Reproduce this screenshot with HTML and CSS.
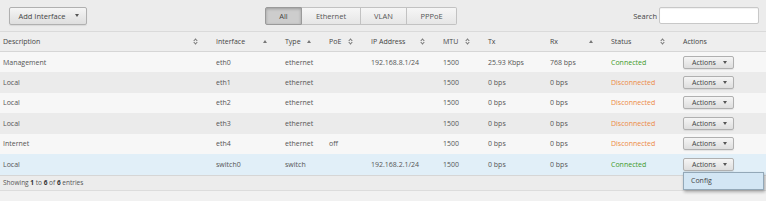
FILE: index.html
```html
<!DOCTYPE html>
<html>
<head>
<meta charset="utf-8">
<link rel="stylesheet" href="styles.css">
</head>
<body>
<div class="toolbar">
  <button class="btn add-btn">Add Interface <span class="caret"></span></button>
  <div class="tabs">
    <button class="tab tab-all active">All</button>
    <button class="tab tab-eth">Ethernet</button>
    <button class="tab tab-vlan">VLAN</button>
    <button class="tab tab-pppoe">PPPoE</button>
  </div>
  <label class="search">Search <input type="text"></label>
</div>
<table class="grid">
  <colgroup>
    <col class="c-desc"><col class="c-if"><col class="c-type"><col class="c-poe"><col class="c-ip"><col class="c-mtu"><col class="c-tx"><col class="c-rx"><col class="c-status"><col class="c-act">
  </colgroup>
  <thead>
    <tr>
      <th class="first"><div class="th"><span>Description</span><span class="both"></span></div></th>
      <th><div class="th"><span>Interface</span><span class="up"></span></div></th>
      <th><div class="th"><span>Type</span><span class="up"></span></div></th>
      <th><div class="th"><span>PoE</span><span class="both"></span></div></th>
      <th><div class="th"><span>IP Address</span><span class="both"></span></div></th>
      <th><div class="th"><span>MTU</span><span class="both"></span></div></th>
      <th><div class="th"><span>Tx</span></div></th>
      <th><div class="th"><span>Rx</span><span class="up"></span></div></th>
      <th><div class="th"><span>Status</span><span class="both"></span></div></th>
      <th><div class="th"><span>Actions</span></div></th>
    </tr>
  </thead>
  <tbody>
    <tr class="odd">
      <td class="first">Management</td><td>eth0</td><td>ethernet</td><td></td><td>192.168.8.1/24</td><td>1500</td><td>25.93 Kbps</td><td>768 bps</td><td class="ok">Connected</td>
      <td class="act"><button class="btn act-btn">Actions <span class="caret"></span></button></td>
    </tr>
    <tr class="even">
      <td class="first">Local</td><td>eth1</td><td>ethernet</td><td></td><td></td><td>1500</td><td>0 bps</td><td>0 bps</td><td class="bad">Disconnected</td>
      <td class="act"><button class="btn act-btn">Actions <span class="caret"></span></button></td>
    </tr>
    <tr class="odd">
      <td class="first">Local</td><td>eth2</td><td>ethernet</td><td></td><td></td><td>1500</td><td>0 bps</td><td>0 bps</td><td class="bad">Disconnected</td>
      <td class="act"><button class="btn act-btn">Actions <span class="caret"></span></button></td>
    </tr>
    <tr class="even">
      <td class="first">Local</td><td>eth3</td><td>ethernet</td><td></td><td></td><td>1500</td><td>0 bps</td><td>0 bps</td><td class="bad">Disconnected</td>
      <td class="act"><button class="btn act-btn">Actions <span class="caret"></span></button></td>
    </tr>
    <tr class="odd">
      <td class="first">Internet</td><td>eth4</td><td>ethernet</td><td>off</td><td></td><td>1500</td><td>0 bps</td><td>0 bps</td><td class="bad">Disconnected</td>
      <td class="act"><button class="btn act-btn">Actions <span class="caret"></span></button></td>
    </tr>
    <tr class="selected">
      <td class="first">Local</td><td>switch0</td><td>switch</td><td></td><td>192.168.2.1/24</td><td>1500</td><td>0 bps</td><td>0 bps</td><td class="ok">Connected</td>
      <td class="act"><div class="act-wrap"><button class="btn act-btn">Actions <span class="caret"></span></button>
        <div class="menu"><div class="menu-item">Config</div></div></div></td>
    </tr>
  </tbody>
</table>
<div class="footer">Showing <b>1</b> to <b>6</b> of <b>6</b> entries</div>
<div class="bottom"></div>
</body>
</html>
```
FILE: styles.css
```css
html, body {
  margin: 0;
  padding: 0;
}
body {
  background: #ededed;
  font-family: "Open Sans", "DejaVu Sans", sans-serif;
  color: #555;
  font-size: 7px;
  width: 766px;
  height: 201px;
  overflow: hidden;
}
.toolbar {
  display: flex;
  align-items: center;
  height: 31px;
  padding: 0 7px 0 9px;
  box-sizing: border-box;
  background: #ececec;
}
.btn {
  font-family: "Open Sans", "DejaVu Sans", sans-serif;
  color: #444;
  background: linear-gradient(#f5f5f5, #dedede);
  border: 1px solid #b0b0b0;
  border-radius: 2px;
  padding: 0;
  margin: 0;
  box-sizing: border-box;
  display: flex;
  align-items: center;
  justify-content: center;
  box-shadow: 0 1px 1px rgba(0,0,0,0.08);
}
.caret {
  display: inline-block;
  width: 0;
  height: 0;
  border-left: 2.5px solid transparent;
  border-right: 2.5px solid transparent;
  border-top: 3px solid #555;
}
.add-btn {
  width: 78px;
  height: 18px;
  font-size: 7.5px;
  gap: 9px;
  padding-left: 1px;
}
.tabs {
  display: flex;
  margin-left: 178px;
  height: 18px;
}
.tab {
  font-family: "Open Sans", "DejaVu Sans", sans-serif;
  font-size: 7.5px;
  color: #555;
  background: linear-gradient(#f6f6f6, #e6e6e6);
  border: 1px solid #c2c2c2;
  border-left: none;
  margin: 0;
  padding: 0;
  height: 18px;
  box-sizing: border-box;
}
.tab-all {
  width: 37px;
  border-left: 1px solid #999;
  border-color: #9a9a9a;
  border-radius: 2px 0 0 2px;
}
.tab-all.active {
  background: #cdcdcd;
  box-shadow: inset 0 1px 3px rgba(0,0,0,0.25);
  color: #444;
}
.tab-eth { width: 59px; }
.tab-vlan { width: 46px; }
.tab-pppoe { width: 50px; border-radius: 0 2px 2px 0; }
.search {
  margin-left: auto;
  display: flex;
  align-items: center;
  gap: 2px;
  font-size: 7.5px;
  color: #444;
}
.search input {
  width: 100px;
  height: 17px;
  box-sizing: border-box;
  border: 1px solid #c8c8c8;
  border-radius: 2px;
  background: #fff;
  margin: 0;
  padding: 0 3px;
  box-shadow: inset 0 1px 1px rgba(0,0,0,0.06);
}
.grid {
  width: 766px;
  border-collapse: collapse;
  table-layout: fixed;
}
.c-desc { width: 212px; }
.c-if { width: 69px; }
.c-type { width: 44px; }
.c-poe { width: 42px; }
.c-ip { width: 72px; }
.c-mtu { width: 45px; }
.c-tx { width: 62px; }
.c-rx { width: 61px; }
.c-status { width: 72px; }
.c-act { width: 87px; }
thead tr {
  background: #eeeeee;
  border-top: 1px solid #dadada;
  border-bottom: 1px solid #d6d6d6;
}
th {
  height: 19px;
  padding: 0 0 0 4px;
  font-weight: normal;
  text-align: left;
  color: #444;
  font-size: 7px;
}
th.first, td.first { padding-left: 3px; }
.th {
  display: flex;
  align-items: center;
  justify-content: space-between;
  padding-right: 14px;
}
.up {
  width: 0;
  height: 0;
  border-left: 2.5px solid transparent;
  border-right: 2.5px solid transparent;
  border-bottom: 3px solid #777;
}
.both {
  width: 5px;
  height: 7px;
  position: relative;
}
.both::before, .both::after {
  content: "";
  position: absolute;
  left: 1px;
  width: 2px;
  height: 2px;
  border-left: 1px solid #777;
  border-top: 1px solid #777;
}
.both::before { top: 1px; transform: rotate(45deg); }
.both::after { top: 3px; transform: rotate(-135deg); }
td {
  height: 20.5px;
  padding: 0 0 0 4px;
  font-size: 7px;
  color: #555;
  white-space: nowrap;
  box-sizing: border-box;
}
tr.odd { background: #f7f7f7; }
tr.even { background: #ebebeb; }
tr.selected { background: #e1eff8; }
td.ok { color: #3e9a2a; }
td.bad { color: #ec8a45; }
.act-wrap { position: relative; }
.act-btn {
  width: 51px;
  height: 13px;
  font-size: 7px;
  gap: 7px;
  padding-left: 2px;
}
.menu {
  position: absolute;
  left: 0;
  top: 14px;
  width: 81px;
  height: 18px;
  box-sizing: border-box;
  background: #d3e6f4;
  border: 1px solid #93a8b8;
  box-shadow: 1px 2px 3px rgba(0,0,0,0.3);
  z-index: 2;
  display: flex;
  align-items: center;
}
.menu-item {
  padding-left: 7px;
  color: #444;
  font-size: 7px;
}
.footer {
  height: 14px;
  line-height: 14px;
  padding-left: 3px;
  border-top: 1px solid #d6d6d6;
  border-bottom: 1px solid #dcdcdc;
  background: #ececec;
  font-size: 6.5px;
  color: #555;
}
.footer b { color: #333; }
.bottom {
  height: 12px;
  background: #f1f1f1;
}
```
